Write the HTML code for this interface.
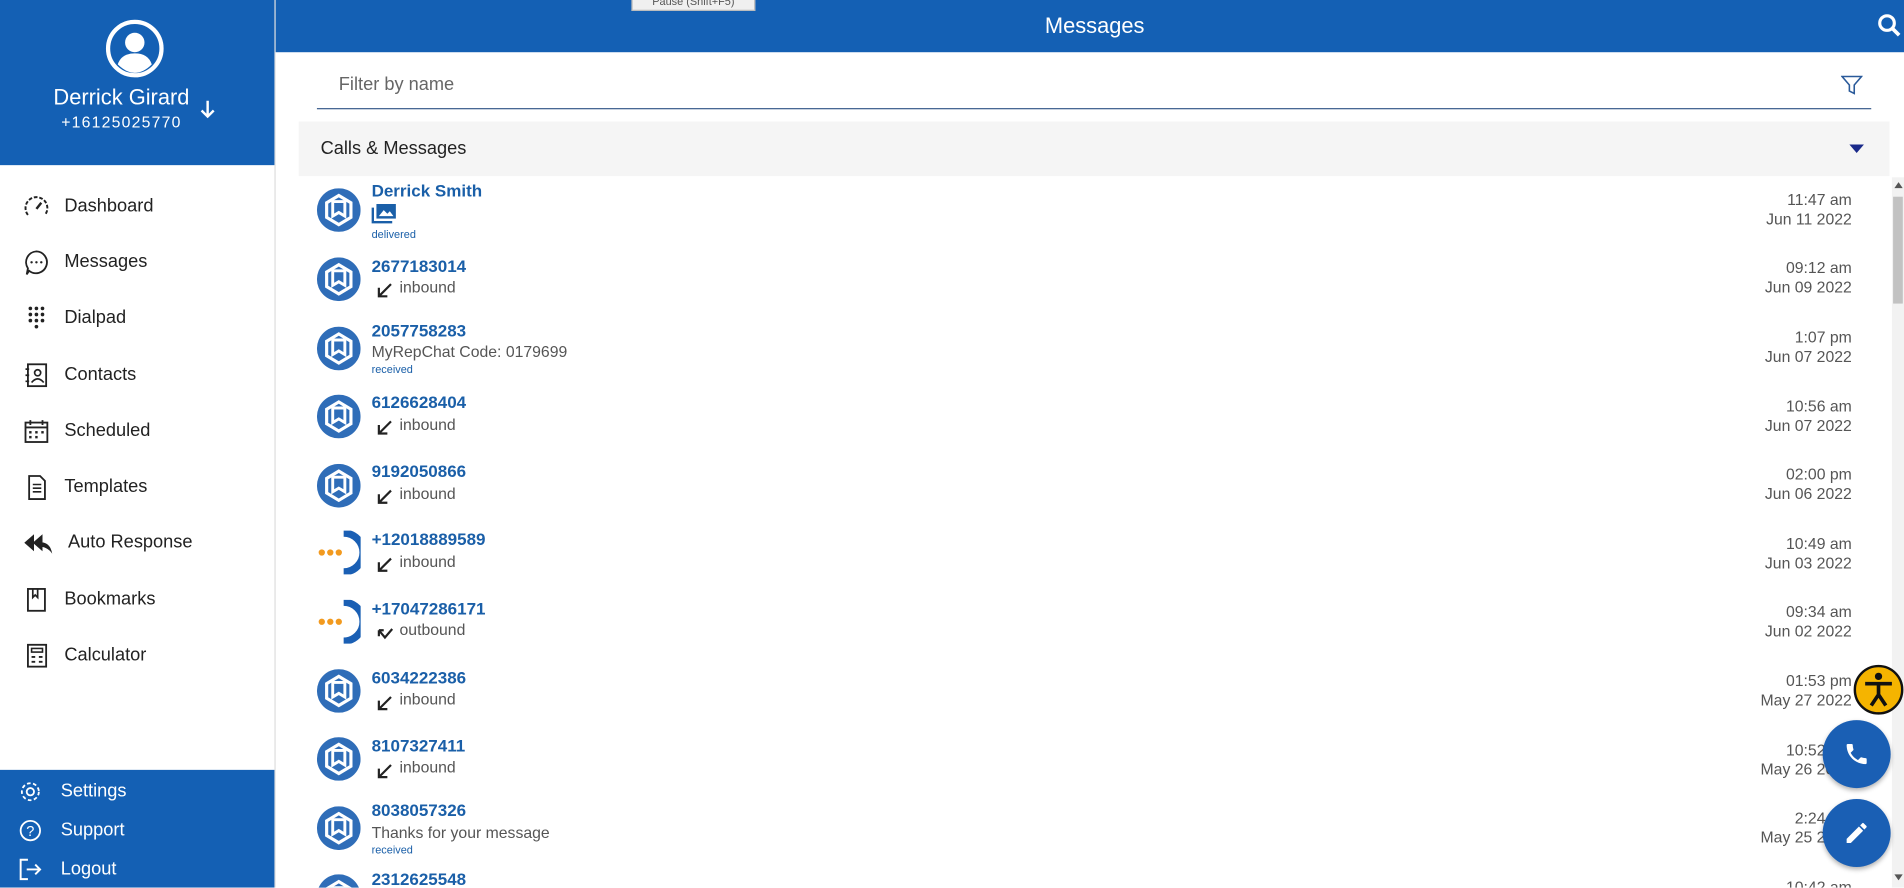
<!DOCTYPE html>
<html><head><meta charset="utf-8"><style>
html,body{margin:0;padding:0;width:1904px;height:888px;overflow:hidden;background:#fff;font-family:"Liberation Sans",Arial,sans-serif}
#w{position:absolute;left:0;top:0;width:1568px;height:731px;transform:scale(1.2143);transform-origin:0 0;overflow:hidden}
.a{position:absolute}
.side{left:0;top:0;width:226px;height:731px;border-right:1px solid #ddd;background:#fff}
.hdr{left:0;top:0;width:226px;height:136px;background:#1460b4}
.nav{position:absolute;left:53px;font-size:15px;color:#222}
.ni{position:absolute;left:19px;width:22px;height:22px}
.bot{left:0;top:634px;width:226px;height:97px;background:#1460b4}
.bt{position:absolute;left:50px;color:#fff;font-size:15px}
.top{left:227px;top:0;width:1341px;height:43px;background:#1460b4}
.nm{position:absolute;left:306px;font-size:14px;font-weight:bold;color:#1a5fa8}
.sb{position:absolute;left:306px;font-size:13px;color:#555}
.st{position:absolute;left:306px;font-size:9px;color:#1a5fa8}
.tm{position:absolute;right:43px;text-align:right;font-size:13px;color:#555;line-height:16px}
.av{position:absolute;left:261px;width:36px;height:36px}
</style></head><body><div id="w">
<svg width="0" height="0" style="position:absolute"><defs>
<symbol id="hx" viewBox="0 0 36 36"><circle cx="18" cy="18" r="18" fill="#2f6db8"/><path d="M18 6 L28 12 L28 24 L18 30 L8 24 L8 12 Z" fill="none" stroke="#fff" stroke-width="2.6"/><path d="M13 11 L23 11 L23 23 L18 20 L13 23 Z" fill="none" stroke="#fff" stroke-width="2.4"/></symbol>
<symbol id="dt" viewBox="0 0 36 36"><circle cx="4" cy="18" r="2.6" fill="#f29a1f"/><circle cx="11" cy="18" r="2.6" fill="#f29a1f"/><circle cx="18" cy="18" r="2.6" fill="#f29a1f"/><path d="M22 2 A16 16 0 0 1 22 34" fill="none" stroke="#1a5fb4" stroke-width="6"/></symbol>
<symbol id="ib" viewBox="0 0 16 16"><path d="M13 3 L3 13 M3 6 L3 13 L10 13" fill="none" stroke="#222" stroke-width="1.8"/></symbol>
<symbol id="ob" viewBox="0 0 16 16"><path d="M3 5 L8 11 L14 4 M3 5 L3 10 M3 5 L7 5" fill="none" stroke="#222" stroke-width="1.8"/></symbol>
</defs></svg>
<div class="a side"></div>
<div class="a hdr">
<svg class="a" style="left:86px;top:15px" width="50" height="50" viewBox="0 0 50 50"><circle cx="25" cy="25" r="22" fill="none" stroke="#fff" stroke-width="3.5"/><circle cx="25" cy="20" r="8" fill="#fff"/><path d="M11 38 Q14 29 25 29 Q36 29 39 38 Q32 45 25 45 Q18 45 11 38Z" fill="#fff"/></svg>
<div class="a" style="left:0;width:200px;text-align:center;top:70px;color:#fff;font-size:18px">Derrick Girard</div>
<div class="a" style="left:0;width:200px;text-align:center;top:93px;color:#fff;font-size:13px;letter-spacing:1px">+16125025770</div>
<svg class="a" style="left:164px;top:82px" width="14" height="16" viewBox="0 0 14 16"><path d="M7 1 V14 M2 9 L7 14 L12 9" fill="none" stroke="#fff" stroke-width="2"/></svg>
</div>
<svg class="ni" style="top:159px" viewBox="0 0 22 22"><path d="M4 18 A9 9 0 1 1 18 18" fill="none" stroke="#222" stroke-width="1.6" stroke-dasharray="3 1.5"/><path d="M11 13 L15 8" stroke="#222" stroke-width="2"/></svg><div class="nav" style="top:161px">Dashboard</div>
<svg class="ni" style="top:205px" viewBox="0 0 22 22"><path d="M11 2 A9 9 0 1 1 5 18 L3 21 L4 16 A9 9 0 0 1 11 2Z" fill="none" stroke="#222" stroke-width="1.5"/><circle cx="7" cy="11" r="1" fill="#222"/><circle cx="11" cy="11" r="1" fill="#222"/><circle cx="15" cy="11" r="1" fill="#222"/></svg><div class="nav" style="top:207px">Messages</div>
<svg class="ni" style="top:251px" viewBox="0 0 22 22"><g fill="#222"><circle cx="6" cy="3" r="1.5"/><circle cx="11" cy="3" r="1.5"/><circle cx="16" cy="3" r="1.5"/><circle cx="6" cy="8" r="1.5"/><circle cx="11" cy="8" r="1.5"/><circle cx="16" cy="8" r="1.5"/><circle cx="6" cy="13" r="1.5"/><circle cx="11" cy="13" r="1.5"/><circle cx="16" cy="13" r="1.5"/><circle cx="11" cy="18" r="1.5"/></g></svg><div class="nav" style="top:253px">Dialpad</div>
<svg class="ni" style="top:298px" viewBox="0 0 22 22"><rect x="4" y="2" width="15" height="18" fill="none" stroke="#222" stroke-width="1.5"/><circle cx="12" cy="9" r="2.5" fill="none" stroke="#222" stroke-width="1.4"/><path d="M7 17 Q12 11 17 17" fill="none" stroke="#222" stroke-width="1.4"/><path d="M2 6h3M2 11h3M2 16h3" stroke="#222" stroke-width="1.4"/></svg><div class="nav" style="top:300px">Contacts</div>
<svg class="ni" style="top:344px" viewBox="0 0 22 22"><rect x="2" y="4" width="18" height="16" fill="none" stroke="#222" stroke-width="1.5"/><path d="M2 8h18M6 2v4M16 2v4" stroke="#222" stroke-width="1.5"/><g fill="#222"><rect x="5" y="11" width="2" height="2"/><rect x="10" y="11" width="2" height="2"/><rect x="15" y="11" width="2" height="2"/><rect x="5" y="15" width="2" height="2"/><rect x="10" y="15" width="2" height="2"/></g></svg><div class="nav" style="top:346px">Scheduled</div>
<svg class="ni" style="top:390px" viewBox="0 0 22 22"><path d="M5 2h9l4 4v15H5z" fill="none" stroke="#222" stroke-width="1.5"/><path d="M8 9h7M8 12h7M8 15h7" stroke="#222" stroke-width="1.3"/></svg><div class="nav" style="top:392px">Templates</div>
<svg class="ni" style="top:436px;width:26px" viewBox="0 0 26 22"><path d="M9 4 L1 11 L9 18 Z M16 4 L8 11 L16 18 Z" fill="#222"/><path d="M12 11 Q22 9 24 20 Q20 14 12 14Z" fill="#222"/></svg><div class="nav" style="top:438px;left:56px">Auto Response</div>
<svg class="ni" style="top:483px" viewBox="0 0 22 22"><rect x="4" y="2" width="14" height="18" fill="none" stroke="#222" stroke-width="1.5"/><path d="M8 2v7l2-2 2 2V2" fill="none" stroke="#222" stroke-width="1.4"/></svg><div class="nav" style="top:485px">Bookmarks</div>
<svg class="ni" style="top:529px" viewBox="0 0 22 22"><rect x="4" y="2" width="15" height="18" fill="none" stroke="#222" stroke-width="1.5"/><rect x="7" y="5" width="9" height="3" fill="none" stroke="#222" stroke-width="1.3"/><path d="M7 12h3M13 12h3M7 16h3M13 16h3" stroke="#222" stroke-width="1.5"/></svg><div class="nav" style="top:531px">Calculator</div>
<div class="a bot">
<svg class="a" style="left:15px;top:8px" width="20" height="20" viewBox="0 0 20 20"><circle cx="10" cy="10" r="3" fill="none" stroke="#fff" stroke-width="1.5"/><circle cx="10" cy="10" r="7" fill="none" stroke="#fff" stroke-width="1.5" stroke-dasharray="3 2"/></svg><div class="bt" style="top:9px">Settings</div>
<svg class="a" style="left:15px;top:40px" width="20" height="20" viewBox="0 0 20 20"><circle cx="10" cy="10" r="8" fill="none" stroke="#fff" stroke-width="1.5"/><text x="10" y="14.5" text-anchor="middle" font-size="12" fill="#fff" font-family="Liberation Sans">?</text></svg><div class="bt" style="top:41px">Support</div>
<svg class="a" style="left:15px;top:72px" width="20" height="20" viewBox="0 0 20 20"><path d="M8 2H2v16h6M7 10h11M14 6l4 4-4 4" fill="none" stroke="#fff" stroke-width="1.6"/></svg><div class="bt" style="top:73px">Logout</div>
</div>
<div class="a top"><div class="a" style="left:0;width:1349px;text-align:center;top:11px;color:#fff;font-size:18px">Messages</div>
<svg class="a" style="left:1319px;top:11px" width="20" height="20" viewBox="0 0 20 20"><circle cx="8" cy="8" r="6" fill="none" stroke="#fff" stroke-width="2.6"/><path d="M12.5 12.5 L18 18" stroke="#fff" stroke-width="3"/></svg></div>
<div class="a" style="left:520px;top:0;width:100px;height:8px;background:#f0f0f0;border:1px solid #bbb;border-top:0;font-size:9px;color:#555;line-height:2px;overflow:hidden;text-align:center">Pause (Shift+F5)</div>
<div class="a" style="left:279px;top:61px;font-size:15px;color:#666">Filter by name</div>
<div class="a" style="left:261px;top:89px;width:1280px;height:1px;background:#3b5c8c"></div>
<svg class="a" style="left:1516px;top:61px" width="18" height="18" viewBox="0 0 18 18"><path d="M1 2h16l-6 7v7l-4-2V9z" fill="none" stroke="#2a5a9a" stroke-width="1.3"/></svg>
<div class="a" style="left:246px;top:100px;width:1310px;height:45px;background:#f5f5f5"></div>
<div class="a" style="left:264px;top:114px;font-size:15px;color:#222">Calls &amp; Messages</div>
<svg class="a" style="left:1523px;top:119px" width="12" height="8"><path d="M0 0h12L6 7z" fill="#1a2a8a"/></svg>
<div class="a" style="left:1558px;top:146px;width:10px;height:585px;background:#f2f2f2"></div>
<div class="a" style="left:1559px;top:162px;width:8px;height:88px;background:#c2c2c2"></div>
<svg class="a" style="left:1560px;top:150px" width="7" height="5"><path d="M0 5 L3.5 0 L7 5z" fill="#555"/></svg>
<svg class="a" style="left:1560px;top:720px" width="7" height="5"><path d="M0 0 L3.5 5 L7 0z" fill="#555"/></svg>

<svg class="av" style="top:155px"><use href="#hx"/></svg>
<div class="nm" style="top:149px">Derrick Smith</div>
<svg class="a" style="left:306px;top:167px" width="22" height="18" viewBox="0 0 22 18"><rect x="4" y="1" width="16" height="12" fill="#1a5fa8"/><path d="M6 11 L10 6 L13 9 L15 7 L18 11z" fill="#fff"/><path d="M1 4 V16 H17" fill="none" stroke="#1a5fa8" stroke-width="2"/></svg>
<div class="st" style="top:188px">delivered</div>
<div class="tm" style="top:157px">11:47 am<br>Jun 11 2022</div>

<svg class="av" style="top:212px"><use href="#hx"/></svg>
<div class="nm" style="top:211px">2677183014</div>
<svg class="a" style="left:309px;top:231px" width="16" height="16"><use href="#ib"/></svg><div class="sb" style="top:229px;left:329px">inbound</div>
<div class="tm" style="top:213px">09:12 am<br>Jun 09 2022</div>

<svg class="av" style="top:269px"><use href="#hx"/></svg>
<div class="nm" style="top:264px">2057758283</div>
<div class="sb" style="top:282px">MyRepChat Code: 0179699</div>
<div class="st" style="top:299px">received</div>
<div class="tm" style="top:270px">1:07 pm<br>Jun 07 2022</div>

<svg class="av" style="top:325px"><use href="#hx"/></svg>
<div class="nm" style="top:323px">6126628404</div>
<svg class="a" style="left:309px;top:344px" width="16" height="16"><use href="#ib"/></svg><div class="sb" style="top:342px;left:329px">inbound</div>
<div class="tm" style="top:327px">10:56 am<br>Jun 07 2022</div>

<svg class="av" style="top:382px"><use href="#hx"/></svg>
<div class="nm" style="top:380px">9192050866</div>
<svg class="a" style="left:309px;top:401px" width="16" height="16"><use href="#ib"/></svg><div class="sb" style="top:399px;left:329px">inbound</div>
<div class="tm" style="top:383px">02:00 pm<br>Jun 06 2022</div>

<svg class="av" style="top:437px"><use href="#dt"/></svg>
<div class="nm" style="top:436px">+12018889589</div>
<svg class="a" style="left:309px;top:457px" width="16" height="16"><use href="#ib"/></svg><div class="sb" style="top:455px;left:329px">inbound</div>
<div class="tm" style="top:440px">10:49 am<br>Jun 03 2022</div>

<svg class="av" style="top:494px"><use href="#dt"/></svg>
<div class="nm" style="top:493px">+17047286171</div>
<svg class="a" style="left:309px;top:514px" width="16" height="16"><use href="#ob"/></svg><div class="sb" style="top:511px;left:329px">outbound</div>
<div class="tm" style="top:496px">09:34 am<br>Jun 02 2022</div>

<svg class="av" style="top:551px"><use href="#hx"/></svg>
<div class="nm" style="top:550px">6034222386</div>
<svg class="a" style="left:309px;top:571px" width="16" height="16"><use href="#ib"/></svg><div class="sb" style="top:568px;left:329px">inbound</div>
<div class="tm" style="top:553px">01:53 pm<br>May 27 2022</div>

<svg class="av" style="top:607px"><use href="#hx"/></svg>
<div class="nm" style="top:606px">8107327411</div>
<svg class="a" style="left:309px;top:627px" width="16" height="16"><use href="#ib"/></svg><div class="sb" style="top:624px;left:329px">inbound</div>
<div class="tm" style="top:610px">10:52 am<br>May 26 2022</div>

<svg class="av" style="top:664px"><use href="#hx"/></svg>
<div class="nm" style="top:659px">8038057326</div>
<div class="sb" style="top:678px">Thanks for your message</div>
<div class="st" style="top:695px">received</div>
<div class="tm" style="top:666px">2:24 pm<br>May 25 2022</div>

<svg class="av" style="top:720px"><use href="#hx"/></svg>
<div class="nm" style="top:716px">2312625548</div>
<div class="tm" style="top:723px">10:42 am</div>

<svg class="a" style="left:1526px;top:547px" width="42" height="42" viewBox="0 0 42 42"><circle cx="21" cy="21" r="19.5" fill="#f5b400" stroke="#111" stroke-width="2"/><circle cx="21" cy="10" r="3" fill="#111"/><path d="M10 16 L32 16 M21 16 V25 L15 34 M21 25 L27 34" fill="none" stroke="#111" stroke-width="3"/></svg>
<div class="a" style="left:1501px;top:593px;width:56px;height:56px;border-radius:50%;background:#1a5fb4;box-shadow:0 2px 4px rgba(0,0,0,.3)"></div>
<svg class="a" style="left:1518px;top:610px" width="22" height="22" viewBox="0 0 24 24"><path d="M6.6 10.8c1.4 2.8 3.8 5.1 6.6 6.6l2.2-2.2c.3-.3.7-.4 1-.2 1.1.4 2.300.6 3.6.6.6 0 1 .4 1 1V20c0 .6-.4 1-1 1C10.6 21 3 13.4 3 4c0-.6.4-1 1-1h3.5c.6 0 1 .4 1 1 0 1.300.2 2.500.6 3.600.1.3 0 .7-.2 1z" fill="#fff"/></svg>
<div class="a" style="left:1501px;top:658px;width:56px;height:56px;border-radius:50%;background:#1a5fb4;box-shadow:0 2px 4px rgba(0,0,0,.3)"></div>
<svg class="a" style="left:1518px;top:675px" width="22" height="22" viewBox="0 0 24 24"><path d="M3 17.25V21h3.75L17.8 9.94l-3.75-3.75zM20.7 7.04a1 1 0 0 0 0-1.41l-2.34-2.34a1 1 0 0 0-1.41 0l-1.83 1.83 3.75 3.75z" fill="#fff"/></svg>
</div></body></html>
